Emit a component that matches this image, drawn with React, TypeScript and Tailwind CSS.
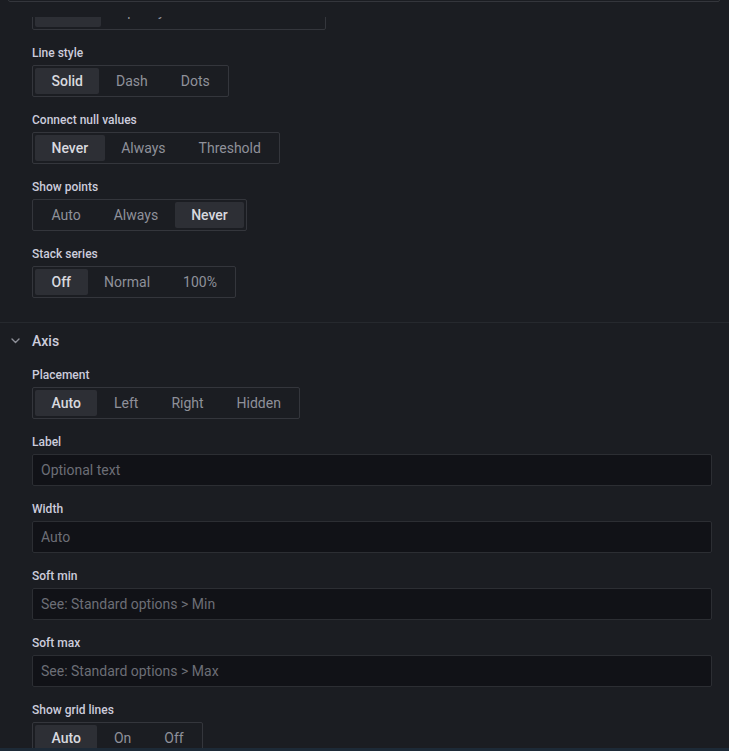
import React from "react";

type RadioProps = { options: string[]; value: string; raised?: boolean };

function RadioGroup({ options, value, raised = false }: RadioProps) {
  return (
    <div className="inline-flex shrink-0 self-start p-[2px] border border-[#34363c] rounded-[2px]">
      {options.map((opt) => (
        <div
          key={opt}
          className={
            (opt === value
              ? "h-[26px] px-[16.5px] flex items-center rounded-[2px] bg-[#2d2f35] text-[#d8d9df] text-sm font-medium"
              : "h-[26px] px-[16.5px] flex items-center text-[#8f919a] text-sm") + (raised ? " pb-[6px]" : "")
          }
        >
          {opt}
        </div>
      ))}
    </div>
  );
}

function Field({ label, children }: { label: string; children: React.ReactNode }) {
  return (
    <div className="mb-4">
      <div className="h-[15px] leading-[14px] mb-1 text-xs font-medium text-[#ccccdc]">{label}</div>
      {children}
    </div>
  );
}

function TextInput({ placeholder }: { placeholder: string }) {
  return (
    <input
      placeholder={placeholder}
      className="w-full h-8 px-2 bg-[#111217] border border-[#2c2e33] rounded-[2px] text-sm text-[#ccccdc] placeholder:text-[#6c6e76] outline-none"
    />
  );
}

export default function App() {
  return (
    <div className="h-[751px] w-[729px] bg-[#1b1d22] flex flex-col overflow-hidden font-['Roboto',sans-serif]">
      {/* bottom edge of the sticky search box */}
      <div className="h-[17px] shrink-0 overflow-hidden flex flex-col justify-end pl-2 pr-[9px]">
        <div className="h-10 shrink-0 mb-[15px] border border-[#34363c] rounded-[2px]" />
      </div>

      <div className="flex-1 min-h-0 overflow-hidden">
        <div className="pb-2 border-b border-[#26292e]">
          <div className="pl-8 pr-[17px]">
            {/* Gradient mode, scrolled mostly out of view */}
            <div className="relative h-[13px] mb-4 overflow-hidden">
              <div className="absolute left-0 bottom-0">
                <RadioGroup options={["None", "Opacity", "Hue", "Scheme"]} value="None" raised />
              </div>
            </div>
            <Field label="Line style">
              <RadioGroup options={["Solid", "Dash", "Dots"]} value="Solid" />
            </Field>
            <Field label="Connect null values">
              <RadioGroup options={["Never", "Always", "Threshold"]} value="Never" />
            </Field>
            <Field label="Show points">
              <RadioGroup options={["Auto", "Always", "Never"]} value="Never" />
            </Field>
            <Field label="Stack series">
              <RadioGroup options={["Off", "Normal", "100%"]} value="Off" />
            </Field>
          </div>
        </div>

        <div>
          <div className="h-9 flex items-center pl-2 gap-2">
            <svg width="16" height="16" viewBox="0 0 16 16" fill="none">
              <polyline points="4,6 7.5,9.5 11,6" stroke="#8e9099" strokeWidth="1.4" strokeLinecap="round" strokeLinejoin="round" />
            </svg>
            <span className="text-sm font-medium text-[#ccccdc]">Axis</span>
          </div>
          <div className="pl-8 pr-[17px] mt-[9px]">
            <Field label="Placement">
              <RadioGroup options={["Auto", "Left", "Right", "Hidden"]} value="Auto" />
            </Field>
            <Field label="Label">
              <TextInput placeholder="Optional text" />
            </Field>
            <Field label="Width">
              <TextInput placeholder="Auto" />
            </Field>
            <Field label="Soft min">
              <TextInput placeholder="See: Standard options > Min" />
            </Field>
            <Field label="Soft max">
              <TextInput placeholder="See: Standard options > Max" />
            </Field>
            <Field label="Show grid lines">
              <RadioGroup options={["Auto", "On", "Off"]} value="Auto" />
            </Field>
          </div>
        </div>
      </div>

      <div className="h-[3px] shrink-0 bg-[#1d2a37]" />
    </div>
  );
}
